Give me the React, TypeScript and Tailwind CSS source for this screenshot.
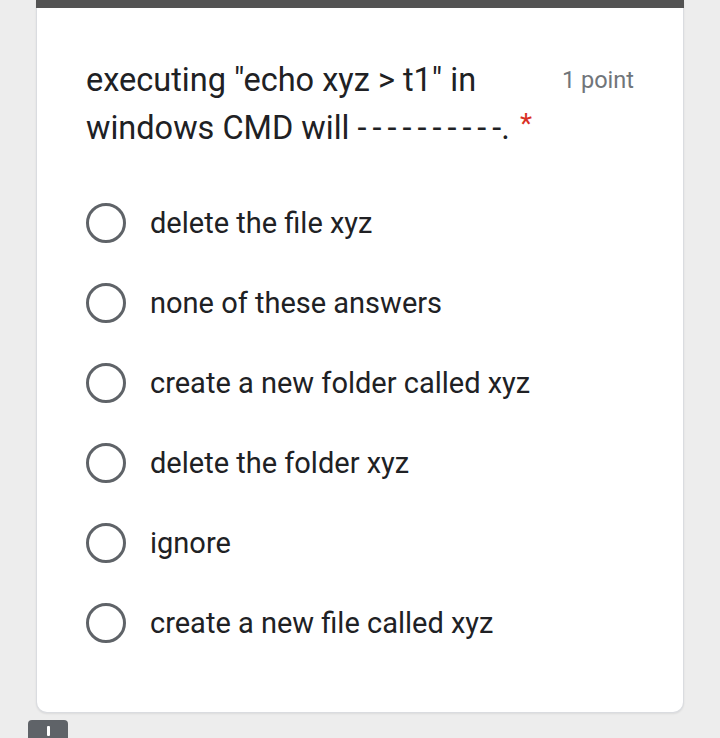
import React from "react";

const options = [
  "delete the file xyz",
  "none of these answers",
  "create a new folder called xyz",
  "delete the folder xyz",
  "ignore",
  "create a new file called xyz",
];

export default function App() {
  return (
    <div
      className="w-[720px] h-[738px] bg-[#ededed] overflow-hidden relative"
      style={{ fontFamily: "Roboto, 'Noto Sans', sans-serif" }}
    >
      <div className="ml-[36px] w-[648px] h-[713px] bg-white border border-t-0 border-[#dadce0] rounded-b-[11px] shadow-[0_1px_2px_rgba(0,0,0,0.08)] flex flex-col">
        <div className="h-[8px] bg-[#535353] -mx-px" />
        <div className="flex pl-[49px] pr-[49px] pt-[48px]">
          <div className="flex-1 text-[32.5px] leading-[48px] text-[#202124]">
            executing "echo xyz &gt; t1" in
            <br />
            windows CMD will <span className="tracking-[6px]">---------</span>-.
            <span className="text-[#d93025] ml-[10px] relative top-[-6px] text-[28px]">*</span>
          </div>
          <div className="text-[23.5px] leading-[48px] text-[#70757a]">1 point</div>
        </div>
        <div className="flex flex-col pl-[49px] pt-[29px]">
          {options.map((o) => (
            <div key={o} className="flex items-center h-[80px]">
              <div className="w-[40px] h-[40px] rounded-full border-[3px] border-[#5f6368] box-border" />
              <div className="ml-[24px] text-[29px] text-[#202124] leading-[32px]">{o}</div>
            </div>
          ))}
        </div>
      </div>
      <div className="absolute left-[28px] top-[720px] w-[40px] h-[24px] bg-[#5f6368] rounded-[4px] flex justify-center pt-[6px]">
        <div className="w-[3px] h-[10px] bg-white rounded-[1px]" />
      </div>
    </div>
  );
}
